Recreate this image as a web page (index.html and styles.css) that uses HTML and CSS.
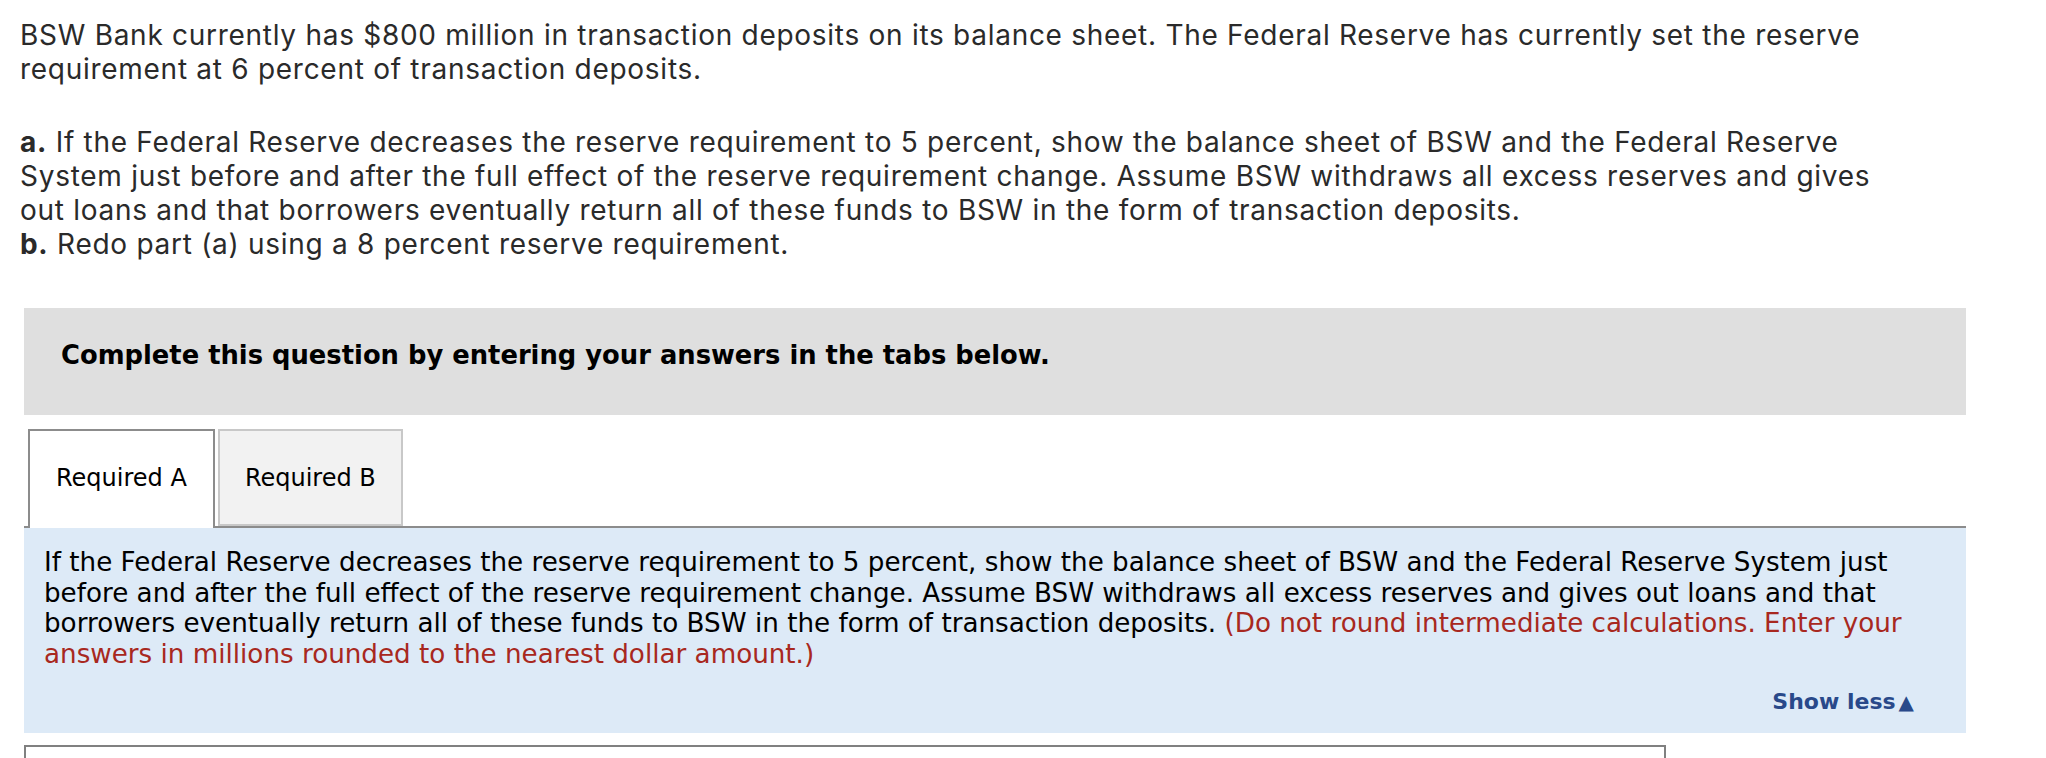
FILE: index.html
```html
<!DOCTYPE html>
<html lang="en">
<head>
<meta charset="utf-8">
<title>BSW Bank reserve requirement</title>
<link rel="stylesheet" href="styles.css">
</head>
<body>
<div class="question">
  <p class="intro">BSW Bank currently has $800 million in transaction deposits on its balance sheet. The Federal Reserve has currently set the reserve<br>requirement at 6 percent of transaction deposits.</p>
  <p class="parts"><b>a.</b> If the Federal Reserve decreases the reserve requirement to 5 percent, show the balance sheet of BSW and the Federal Reserve<br>System just before and after the full effect of the reserve requirement change. Assume BSW withdraws all excess reserves and gives<br>out loans and that borrowers eventually return all of these funds to BSW in the form of transaction deposits.<br><b>b.</b> Redo part (a) using a 8 percent reserve requirement.</p>
</div>
<div class="banner">Complete this question by entering your answers in the tabs below.</div>
<div class="tabs">
  <div class="tab tab-active">Required A</div>
  <div class="tab">Required B</div>
</div>
<div class="panel">
  <p class="panel-text">If the Federal Reserve decreases the reserve requirement to 5 percent, show the balance sheet of BSW and the Federal Reserve System just<br>before and after the full effect of the reserve requirement change. Assume BSW withdraws all excess reserves and gives out loans and that<br>borrowers eventually return all of these funds to BSW in the form of transaction deposits. <span class="note">(Do not round intermediate calculations. Enter your<br>answers in millions rounded to the nearest dollar amount.)</span></p>
  <div class="panel-foot"><a class="show-less" href="#">Show less<span class="caret">&#9650;</span></a></div>
</div>
<div class="answer-box"></div>
</body>
</html>
```
FILE: styles.css
```css
html, body {
  margin: 0;
  padding: 0;
  background: #ffffff;
}
body {
  padding: 18px 0 0 0;
}
.question {
  padding-left: 20px;
  font-family: "Inter", "Open Sans", sans-serif;
  font-size: 28px;
  letter-spacing: 0.72px;
  line-height: 34px;
  color: #2a2a2a;
  white-space: nowrap;
}
.question p {
  margin: 0;
}
.question .intro {
  margin-bottom: 39px;
}
.question .parts {
  margin-bottom: 47px;
}
.question b {
  font-weight: 700;
}
.banner {
  margin-left: 24px;
  width: 1942px;
  height: 107px;
  box-sizing: border-box;
  padding: 32px 0 0 37px;
  background: #dfdfdf;
  font-family: "DejaVu Sans", Verdana, sans-serif;
  font-weight: 700;
  font-size: 25.8px;
  color: #000000;
  white-space: nowrap;
}
.tabs {
  margin: 14px 0 0 24px;
  width: 1942px;
  padding-left: 4px;
  box-sizing: border-box;
  display: flex;
  align-items: flex-start;
  gap: 3px;
  border-bottom: 2px solid #8c8c8c;
}
.tab {
  font-family: "DejaVu Sans", Verdana, sans-serif;
  font-size: 24px;
  color: #000000;
  padding: 33px 25px 32px 25px;
  background: #f2f2f2;
  border: 2px solid #c8c8c8;
  white-space: nowrap;
}
.tab-active {
  background: #ffffff;
  border-color: #8c8c8c;
  border-bottom: none;
  padding: 33px 26px 36px 26px;
  margin-bottom: -2px;
}
.panel {
  margin-left: 24px;
  width: 1942px;
  box-sizing: border-box;
  padding: 19px 52px 19px 20px;
  background: #ddeaf7;
  font-family: "DejaVu Sans", Verdana, sans-serif;
  color: #000000;
}
.panel-text {
  margin: 0;
  font-size: 26.2px;
  line-height: 30.6px;
  white-space: nowrap;
}
.note {
  color: #a82820;
}
.panel-foot {
  margin-top: 20px;
  display: flex;
  justify-content: flex-end;
}
.show-less {
  font-size: 22px;
  font-weight: 700;
  color: #29498a;
  text-decoration: none;
}
.caret {
  margin-left: 3px;
  font-size: 20px;
}
.answer-box {
  margin: 12px 0 0 24px;
  width: 1642px;
  height: 120px;
  box-sizing: border-box;
  border: 2px solid #808080;
  border-bottom: none;
}
```
